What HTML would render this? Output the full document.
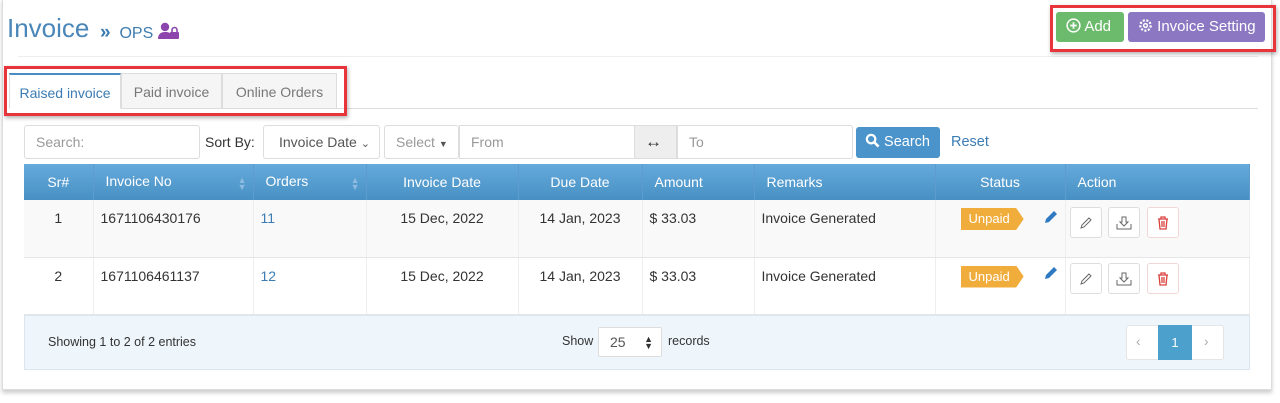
<!DOCTYPE html>
<html><head><style>
*{box-sizing:border-box;margin:0;padding:0}
body{width:1280px;height:403px;background:#fff;font-family:"Liberation Sans",sans-serif;font-size:13.5px;color:#333;position:relative;overflow:hidden}
.frame{position:absolute;left:2px;top:-2px;width:1270px;height:392px;border:1px solid #ddd;box-shadow:0 3px 4px rgba(0,0,0,.2);background:#fff}
.abs{position:absolute}
.title{left:7px;top:13px;font-size:26px;color:#4a86b8;font-weight:300}
.ops{left:100px;top:22px;font-size:16px;color:#3c7cb0}
.hr{left:18px;top:56px;width:1240px;height:1px;background:#eee}
.red{border:3px solid #e8353b;box-shadow:1px 2px 4px rgba(0,0,0,.3)}
.btn{position:absolute;color:#fff;font-size:15px;border-radius:3px;line-height:30px;padding-left:10px}
.tab{position:absolute;top:73px;height:36px;line-height:36px;font-size:14px;color:#777;text-align:center;border:1px solid #ddd;background:#f5f5f5}
.inp{position:absolute;top:125px;height:34px;border:1px solid #ddd;border-radius:3px;line-height:32px;padding-left:11px;color:#999;font-size:14px;background:#fff}
table{position:absolute;left:24px;top:164px;width:1226px;border-collapse:collapse}
th{height:36px;background:linear-gradient(#65aadb,#4890c4);color:#fff;font-weight:normal;font-size:14px;border-right:1px solid #5d9ccc;text-align:left;padding-left:12px}
td{vertical-align:top;padding-top:10px;font-size:14px;border-right:1px solid #eee;padding-left:7px;border-bottom:1px solid #e6e6e6}
tr.r1 td{height:57px;background:#f9f9f9}
tr.r2 td{height:57px;background:#fff}
.c{text-align:center;padding-left:0}
.lnk{color:#3a7cb3}
.badge{display:inline-block;background:#f0ad3c;color:#fff;font-size:13px;height:22px;line-height:22px;padding:0 14px 0 8px;clip-path:polygon(0 0,88% 0,100% 50%,88% 100%,0 100%);margin-left:18px;margin-top:-2px}
.ab{position:absolute;width:32px;height:31px;border:1px solid #ddd;border-radius:3px;background:#fff;display:flex;align-items:center;justify-content:center}
.foot{position:absolute;left:24px;top:315px;width:1226px;height:55px;background:#eef5fb;border:1px solid #dde6ee}
</style></head><body>
<div class="frame"></div>
<div class="abs title">Invoice</div>
<div class="abs ops"><b style="font-size:19px">»</b>&nbsp; OPS
<svg width="22" height="18" viewBox="0 0 22 18" style="vertical-align:-2px"><circle cx="7" cy="5" r="4.2" fill="#8e44ad"/><path d="M0 17c0-5 3-7 7-7s5 1 6 2v5z" fill="#8e44ad"/><rect x="12" y="10" width="9" height="7" rx="1" fill="#8e44ad"/><path d="M14 10V8a2.5 2.5 0 015 0v2" stroke="#8e44ad" stroke-width="1.6" fill="none"/></svg></div>
<div class="abs hr"></div>
<div class="abs red" style="left:1050px;top:5px;width:226px;height:47px"></div>
<div class="btn" style="left:1056px;top:12px;width:68px;background:#6cba6b"><svg width="15" height="15" viewBox="0 0 16 16" style="vertical-align:-2px"><circle cx="8" cy="8" r="6.8" stroke="#fff" stroke-width="1.6" fill="none"/><path d="M8 4.5v7M4.5 8h7" stroke="#fff" stroke-width="1.8"/></svg> Add</div>
<div class="btn" style="left:1128px;top:12px;width:137px;background:#8c78c2"><svg width="15" height="15" viewBox="0 0 16 16" style="vertical-align:-2px"><circle cx="8" cy="8" r="5.5" stroke="#fff" stroke-width="2.4" stroke-dasharray="2.2 1.6" fill="none"/><circle cx="8" cy="8" r="2" stroke="#fff" stroke-width="1.5" fill="none"/></svg> Invoice Setting</div>
<div class="abs" style="left:18px;top:108px;width:1240px;height:1px;background:#ddd"></div>
<div class="tab" style="left:9px;width:112px;background:#fff;color:#3a7cb3;border-bottom-color:#fff;border-top:2px solid #4a8cc4">Raised invoice</div>
<div class="tab" style="left:121px;width:101px">Paid invoice</div>
<div class="tab" style="left:222px;width:115px">Online Orders</div>
<div class="abs red" style="left:4px;top:66px;width:343px;height:50px"></div>
<div class="inp" style="left:24px;width:176px">Search:</div>
<div class="abs" style="left:205px;top:134px;font-size:14px">Sort By:</div>
<div class="inp" style="left:263px;width:117px;color:#555;padding-left:15px">Invoice Date <span style="font-size:11px">⌄</span></div>
<div class="inp" style="left:384px;width:75px">Select <span style="font-size:9px;color:#555">▼</span></div>
<div class="inp" style="left:459px;width:176px;border-radius:0">From</div>
<div class="inp" style="left:634px;width:43px;background:#eee;border-radius:0;color:#333;padding-left:10px;font-size:17px">↔</div>
<div class="inp" style="left:677px;width:176px;border-radius:0 3px 3px 0">To</div>
<div class="btn" style="left:856px;top:127px;width:84px;height:31px;background:#4a93cb;padding-left:9px;font-size:14.5px"><svg width="15" height="15" viewBox="0 0 16 16" style="vertical-align:-2px"><circle cx="6.5" cy="6.5" r="4.5" stroke="#fff" stroke-width="2.4" fill="none"/><path d="M10 10l4.5 4.5" stroke="#fff" stroke-width="2.8"/></svg> Search</div>
<div class="abs lnk" style="left:951px;top:134px;font-size:14.5px">Reset</div>
<table>
<tr><th style="width:69px;text-align:center;padding:0">Sr#</th><th style="width:160px">Invoice No <span style="float:right;margin-right:6px;color:#8bbbe0;font-size:9px;line-height:7px;margin-top:4px">▲<br>▼</span></th><th style="width:113px">Orders <span style="float:right;margin-right:6px;color:#8bbbe0;font-size:9px;line-height:7px;margin-top:4px">▲<br>▼</span></th><th style="width:152px;text-align:center;padding:0">Invoice Date</th><th style="width:124px;text-align:center;padding:0">Due Date</th><th style="width:112px">Amount</th><th style="width:181px">Remarks</th><th style="width:130px;text-align:center;padding:0">Status</th><th>Action</th></tr>
<tr class="r1"><td class="c">1</td><td>1671106430176</td><td class="lnk">11</td><td class="c">15 Dec, 2022</td><td class="c">14 Jan, 2023</td><td>$ 33.03</td><td>Invoice Generated</td><td><span class="badge">Unpaid</span></td><td></td></tr>
<tr class="r2"><td class="c">2</td><td>1671106461137</td><td class="lnk">12</td><td class="c">15 Dec, 2022</td><td class="c">14 Jan, 2023</td><td>$ 33.03</td><td>Invoice Generated</td><td><span class="badge">Unpaid</span></td><td></td></tr>
</table>
<svg class="abs" style="left:1043px;top:209px" width="16" height="16" viewBox="0 0 16 16"><path d="M2 14l1-4 8-8 3 3-8 8z" fill="#2f79c2"/></svg>
<svg class="abs" style="left:1043px;top:265px" width="16" height="16" viewBox="0 0 16 16"><path d="M2 14l1-4 8-8 3 3-8 8z" fill="#2f79c2"/></svg>
<div class="ab" style="left:1070px;top:207px"><svg width="14" height="14" viewBox="0 0 14 14"><path d="M2 12l1-3 7-7 2 2-7 7z" stroke="#666" fill="none"/></svg></div>
<div class="ab" style="left:1108px;top:207px"><svg width="16" height="14" viewBox="0 0 16 14"><path d="M6 1h4v5h2l-4 4-4-4h2z M1 8v5h14V8" stroke="#666" fill="none"/></svg></div>
<div class="ab" style="left:1147px;top:207px;border-color:#f2d6d6"><svg width="14" height="14" viewBox="0 0 14 14"><path d="M2 3h10M5 3V1h4v2M3 3l1 10h6l1-10M6 5v6M8 5v6" stroke="#d9413b" stroke-width="1.3" fill="none"/></svg></div>
<div class="ab" style="left:1070px;top:263px"><svg width="14" height="14" viewBox="0 0 14 14"><path d="M2 12l1-3 7-7 2 2-7 7z" stroke="#666" fill="none"/></svg></div>
<div class="ab" style="left:1108px;top:263px"><svg width="16" height="14" viewBox="0 0 16 14"><path d="M6 1h4v5h2l-4 4-4-4h2z M1 8v5h14V8" stroke="#666" fill="none"/></svg></div>
<div class="ab" style="left:1147px;top:263px;border-color:#f2d6d6"><svg width="14" height="14" viewBox="0 0 14 14"><path d="M2 3h10M5 3V1h4v2M3 3l1 10h6l1-10M6 5v6M8 5v6" stroke="#d9413b" stroke-width="1.3" fill="none"/></svg></div>
<div class="foot"></div>
<div class="abs" style="left:48px;top:335px;font-size:12.5px">Showing 1 to 2 of 2 entries</div>
<div class="abs" style="left:562px;top:334px;font-size:12.5px">Show</div>
<div class="abs" style="left:598px;top:327px;width:64px;height:30px;border:1px solid #ddd;background:#fff;border-radius:2px;font-size:14px;line-height:28px;padding-left:11px;color:#555">25 <span style="font-size:9px;position:absolute;right:8px;top:0;line-height:7px;padding-top:8px;color:#333">▲<br>▼</span></div>
<div class="abs" style="left:668px;top:334px;font-size:12.5px">records</div>
<div class="abs" style="left:1126px;top:325px;width:98px;height:35px;border:1px solid #e5e5e5;background:#fff;border-radius:3px"></div>
<div class="abs" style="left:1136px;top:334px;color:#aaa">‹</div>
<div class="abs" style="left:1158px;top:325px;width:34px;height:35px;background:#4ba1cc;color:#fff;text-align:center;line-height:35px;font-size:13px">1</div>
<div class="abs" style="left:1204px;top:334px;color:#aaa">›</div>
</body></html>
